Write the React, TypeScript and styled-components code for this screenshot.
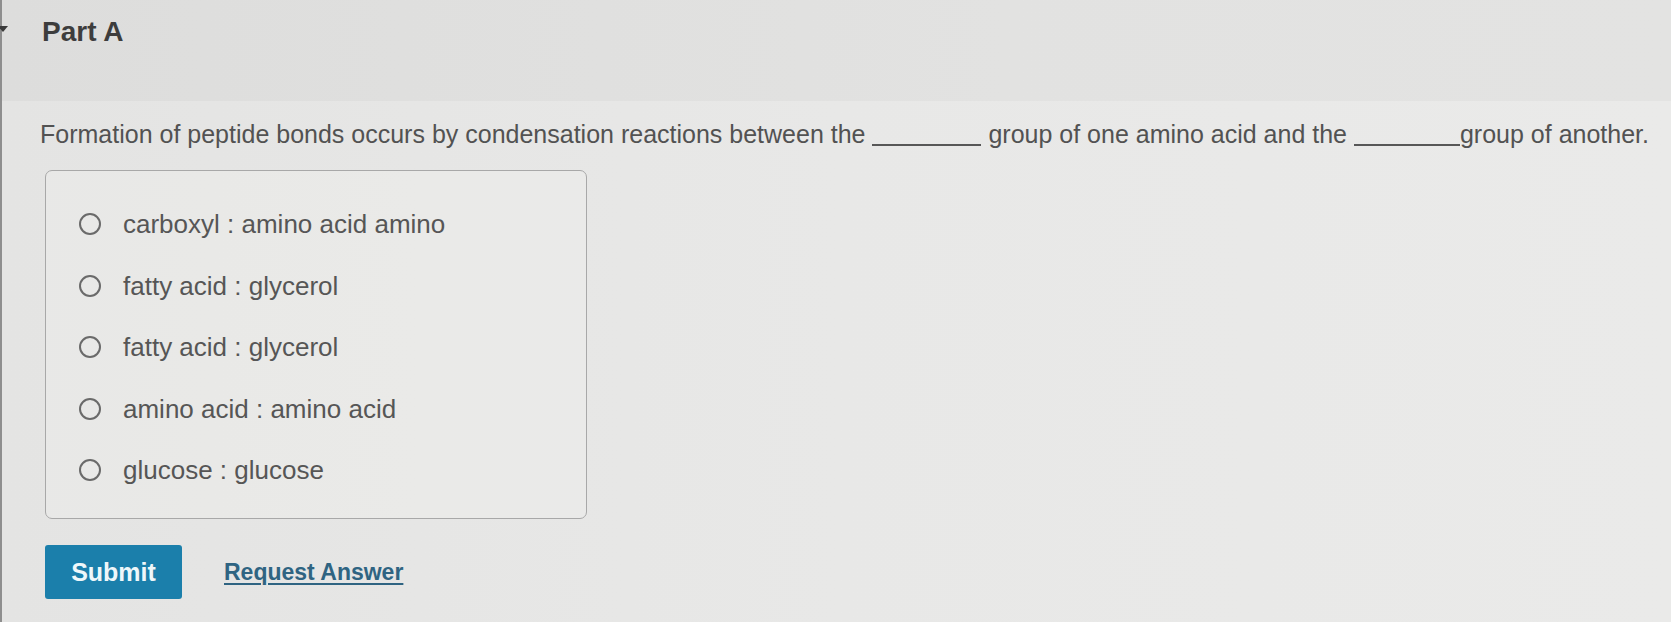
import React from "react";
import styled, { createGlobalStyle } from "styled-components";

const GlobalStyle = createGlobalStyle`
  html, body {
    margin: 0;
    padding: 0;
    background: #e7e7e6;
  }
  body {
    font-family: "Liberation Sans", Arial, Helvetica, sans-serif;
    -webkit-font-smoothing: antialiased;
  }
`;

const Page = styled.div`
  min-height: 622px;
  border-left: 2px solid #8e8e8e;
  background: linear-gradient(90deg, #e4e4e3 0%, #e8e8e7 50%, #eaeae9 100%);
  box-sizing: border-box;
`;

const Header = styled.div`
  height: 101px;
  display: flex;
  align-items: flex-start;
  gap: 34px;
  padding-top: 15px;
  box-sizing: border-box;
  background: linear-gradient(90deg, #dddddc 0%, #e2e2e1 60%, #e3e3e2 100%);
`;

const Caret = styled.span`
  margin-left: -4px;
  margin-top: 11px;
  width: 0;
  height: 0;
  border-left: 5px solid transparent;
  border-right: 5px solid transparent;
  border-top: 6px solid #3a3a3a;
`;

const Title = styled.h2`
  margin: 0;
  font-size: 28px;
  line-height: 34px;
  font-weight: 700;
  color: #3d3d3d;
`;

const Body = styled.div`
  padding: 18px 0 0 38px;
`;

const Question = styled.p`
  margin: 0;
  font-size: 25px;
  line-height: 30px;
  color: #525252;
  white-space: nowrap;
`;

const Blank = styled.span<{ $w: number }>`
  display: inline-block;
  width: ${(p) => p.$w}px;
  border-bottom: 2px solid #575757;
  vertical-align: -3px;
`;

const Choices = styled.div`
  margin: 21px 0 0 5px;
  width: 542px;
  box-sizing: border-box;
  border: 1px solid #a8a8a8;
  border-radius: 7px;
  padding: 38px 0 33px 33px;
  display: flex;
  flex-direction: column;
  gap: 31.5px;
  background: rgba(240, 240, 239, 0.35);
`;

const Choice = styled.label`
  display: flex;
  align-items: center;
  gap: 22px;
  height: 30px;
  font-size: 26px;
  line-height: 30px;
  color: #565656;
`;

const Radio = styled.span`
  width: 22px;
  height: 22px;
  box-sizing: border-box;
  border: 2px solid #6a6a6a;
  border-radius: 50%;
  flex: 0 0 auto;
`;

const Actions = styled.div`
  margin: 26px 0 0 5px;
  display: flex;
  align-items: center;
  gap: 42px;
`;

const SubmitButton = styled.button`
  width: 137px;
  height: 54px;
  border: none;
  border-radius: 3px;
  background: #1b7fab;
  color: #eef7fa;
  font-family: "Liberation Sans", Arial, sans-serif;
  font-size: 25px;
  font-weight: 700;
  padding: 0;
`;

const RequestLink = styled.a`
  font-size: 23px;
  font-weight: 700;
  color: #2f6482;
  text-decoration: underline;
  text-decoration-thickness: 2px;
  text-underline-offset: 3px;
`;

const options = [
  "carboxyl : amino acid amino",
  "fatty acid : glycerol",
  "fatty acid : glycerol",
  "amino acid : amino acid",
  "glucose : glucose",
];

export default function App() {
  return (
    <>
      <GlobalStyle />
      <Page>
        <Header>
          <Caret />
          <Title>Part A</Title>
        </Header>
        <Body>
          <Question>
            Formation of peptide bonds occurs by condensation reactions between the{" "}
            <Blank $w={109} /> group of one amino acid and the <Blank $w={106} />
            group of another.
          </Question>
          <Choices>
            {options.map((o, i) => (
              <Choice key={i}>
                <Radio />
                {o}
              </Choice>
            ))}
          </Choices>
          <Actions>
            <SubmitButton>Submit</SubmitButton>
            <RequestLink>Request Answer</RequestLink>
          </Actions>
        </Body>
      </Page>
    </>
  );
}
